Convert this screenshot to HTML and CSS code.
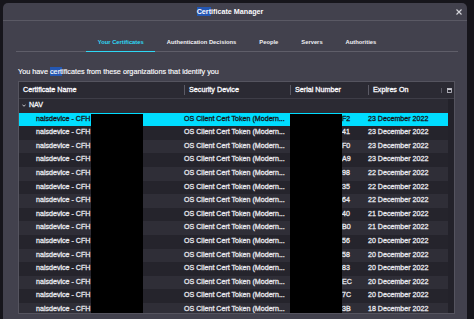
FILE: index.html
```html
<!DOCTYPE html>
<html lang="en">
<head>
    <meta charset="UTF-8">
    <meta name="viewport" content="width=device-width, initial-scale=1.0">
    <title>Certificate Manager</title>
    <link rel="stylesheet" href="styles.css">
</head>
<body>
    <div class="dialog">
        <div class="titlebar">
            <span></span>
            <h1><span class="sel">Cert</span>ificate Manager</h1>
            <span class="close">
                <svg width="6" height="6" viewBox="0 0 6 6"><path d="M0.5 0.5L5.5 5.5M5.5 0.5L0.5 5.5" stroke="#d6d6dc" stroke-width="1.1"/></svg>
            </span>
        </div>
        <nav class="tabs">
            <a class="tab active">Your Certificates</a>
            <a class="tab">Authentication Decisions</a>
            <a class="tab">People</a>
            <a class="tab">Servers</a>
            <a class="tab">Authorities</a>
        </nav>
        <p class="intro">You have <span class="sel">cert</span>ificates from these organizations that identify you</p>
        <div class="table">
            <div class="thead">
                <div class="th">Certificate Name</div>
                <div class="th">Security Device</div>
                <div class="th">Serial Number</div>
                <div class="th">Expires On</div>
                <div class="th picker">
                    <svg width="5" height="5" viewBox="0 0 5 5"><rect x="0.5" y="0.5" width="4" height="4" fill="none" stroke="#c8c8d0" stroke-width="0.8"/><rect x="0.5" y="0.5" width="4" height="1.5" fill="#c8c8d0"/></svg>
                </div>
            </div>
            <div class="tbody">
                <div class="group">
                    <svg class="chev" width="4" height="3" viewBox="0 0 4 3"><path d="M0.4 0.6L2 2.3L3.6 0.6" fill="none" stroke="#e8e8ee" stroke-width="0.8"/></svg>
                    NAV
                </div>
                <div class="row selected"><span class="name">naisdevice - CFH</span><span class="dev">OS Client Cert Token (Modern...</span><span class="serial">F2</span><span class="date">23 December 2022</span></div>
                <div class="row"><span class="name">naisdevice - CFH</span><span class="dev">OS Client Cert Token (Modern...</span><span class="serial">41</span><span class="date">23 December 2022</span></div>
                <div class="row"><span class="name">naisdevice - CFH</span><span class="dev">OS Client Cert Token (Modern...</span><span class="serial">F0</span><span class="date">23 December 2022</span></div>
                <div class="row"><span class="name">naisdevice - CFH</span><span class="dev">OS Client Cert Token (Modern...</span><span class="serial">A9</span><span class="date">23 December 2022</span></div>
                <div class="row"><span class="name">naisdevice - CFH</span><span class="dev">OS Client Cert Token (Modern...</span><span class="serial">98</span><span class="date">22 December 2022</span></div>
                <div class="row"><span class="name">naisdevice - CFH</span><span class="dev">OS Client Cert Token (Modern...</span><span class="serial">35</span><span class="date">22 December 2022</span></div>
                <div class="row"><span class="name">naisdevice - CFH</span><span class="dev">OS Client Cert Token (Modern...</span><span class="serial">64</span><span class="date">22 December 2022</span></div>
                <div class="row"><span class="name">naisdevice - CFH</span><span class="dev">OS Client Cert Token (Modern...</span><span class="serial">40</span><span class="date">21 December 2022</span></div>
                <div class="row"><span class="name">naisdevice - CFH</span><span class="dev">OS Client Cert Token (Modern...</span><span class="serial">B0</span><span class="date">21 December 2022</span></div>
                <div class="row"><span class="name">naisdevice - CFH</span><span class="dev">OS Client Cert Token (Modern...</span><span class="serial">56</span><span class="date">20 December 2022</span></div>
                <div class="row"><span class="name">naisdevice - CFH</span><span class="dev">OS Client Cert Token (Modern...</span><span class="serial">58</span><span class="date">20 December 2022</span></div>
                <div class="row"><span class="name">naisdevice - CFH</span><span class="dev">OS Client Cert Token (Modern...</span><span class="serial">83</span><span class="date">20 December 2022</span></div>
                <div class="row"><span class="name">naisdevice - CFH</span><span class="dev">OS Client Cert Token (Modern...</span><span class="serial">EC</span><span class="date">20 December 2022</span></div>
                <div class="row"><span class="name">naisdevice - CFH</span><span class="dev">OS Client Cert Token (Modern...</span><span class="serial">7C</span><span class="date">20 December 2022</span></div>
                <div class="row"><span class="name">naisdevice - CFH</span><span class="dev">OS Client Cert Token (Modern...</span><span class="serial">3B</span><span class="date">18 December 2022</span></div>
                <!-- redacted values -->
                <div class="redact redact-name"></div>
                <div class="redact redact-serial"></div>
            </div>
        </div>
    </div>
</body>
</html>
```

FILE: styles.css
```css
body {
    margin: 0;
    background-color: #16151b;
    font-family: 'Liberation Sans', Arial, sans-serif;
    color: #fbfbfe;
    width: 474px;
    height: 319px;
    overflow: hidden;
}
.dialog {
    margin: 3px 7px 0 3px;
    height: 316px;
    background-color: #42414d;
    border-radius: 5px 5px 0 0;
    overflow: hidden;
}
.titlebar {
    display: grid;
    grid-template-columns: 1fr auto 1fr;
    align-items: center;
    height: 17px;
    border-bottom: 1px solid #5a5964;
}
.titlebar h1 {
    margin: 0 10px 0 0;
    font-size: 7.2px;
    font-weight: bold;
    line-height: 9px;
}
.close {
    justify-self: end;
    display: flex;
    padding-right: 5px;
}
.sel {
    background-color: #2457b3;
}
.tabs {
    display: flex;
    justify-content: center;
    margin: 0 9px 0 13px;
    border-bottom: 1px solid #5f5e69;
}
.tab {
    padding: 17px 11.5px 5px;
    font-size: 5.8px;
    font-weight: bold;
    line-height: 8px;
    color: #f0f0f4;
    border-bottom: 1.5px solid transparent;
    margin-bottom: -1px;
}
.tab.active {
    color: #2ed8f5;
    border-bottom-color: #2ed8f5;
}
.intro {
    margin: 15px 0 0 15px;
    font-size: 7.25px;
    line-height: 9px;
    -webkit-text-stroke: 0.15px currentColor;
}
.table {
    margin: 5px 12px 0 15px;
    height: 231px;
    border: 1px solid #55545f;
    background-color: #23222a;
    display: flex;
    flex-direction: column;
    overflow: hidden;
}
.thead {
    display: grid;
    grid-template-columns: 165px 106px 78px 73px 1fr;
    align-items: center;
    height: 16px;
    background-color: #2b2a33;
    border-bottom: 1px solid #3e3d47;
    flex-shrink: 0;
}
.th {
    padding-left: 4px;
    font-size: 7.2px;
    line-height: 10px;
    -webkit-text-stroke: 0.3px currentColor;
    border-left: 1px solid #5b5a65;
    white-space: nowrap;
}
.th:first-child {
    border-left: none;
}
.th.picker {
    display: flex;
    align-items: center;
    padding-left: 5px;
}
.tbody {
    position: relative;
    flex: 1;
    padding-right: 6px;
}
.group, .row {
    height: 13.6px;
    line-height: 13.6px;
    font-size: 7.1px;
    white-space: nowrap;
    -webkit-text-stroke: 0.3px currentColor;
}
.group {
    display: flex;
    align-items: center;
    padding-left: 3px;
    color: #f4f4f8;
    background-color: #2b2a33;
}
.chev {
    margin-right: 3px;
}
.row {
    display: grid;
    grid-template-columns: 165px 106px 78px 73px;
    color: #e6e6ec;
    background-color: #2f2e37;
}
.row:nth-of-type(odd) {
    background-color: #25242c;
}
.row.selected {
    background-color: #00ddff;
    color: #15141a;
}
.row .name {
    padding-left: 17px;
}
.row .serial {
    padding-left: 52px;
}
.redact {
    position: absolute;
    top: 14.6px;
    bottom: 0;
    width: 52px;
    background-color: #000;
}
.redact-name {
    left: 72px;
}
.redact-serial {
    left: 271px;
}
```
